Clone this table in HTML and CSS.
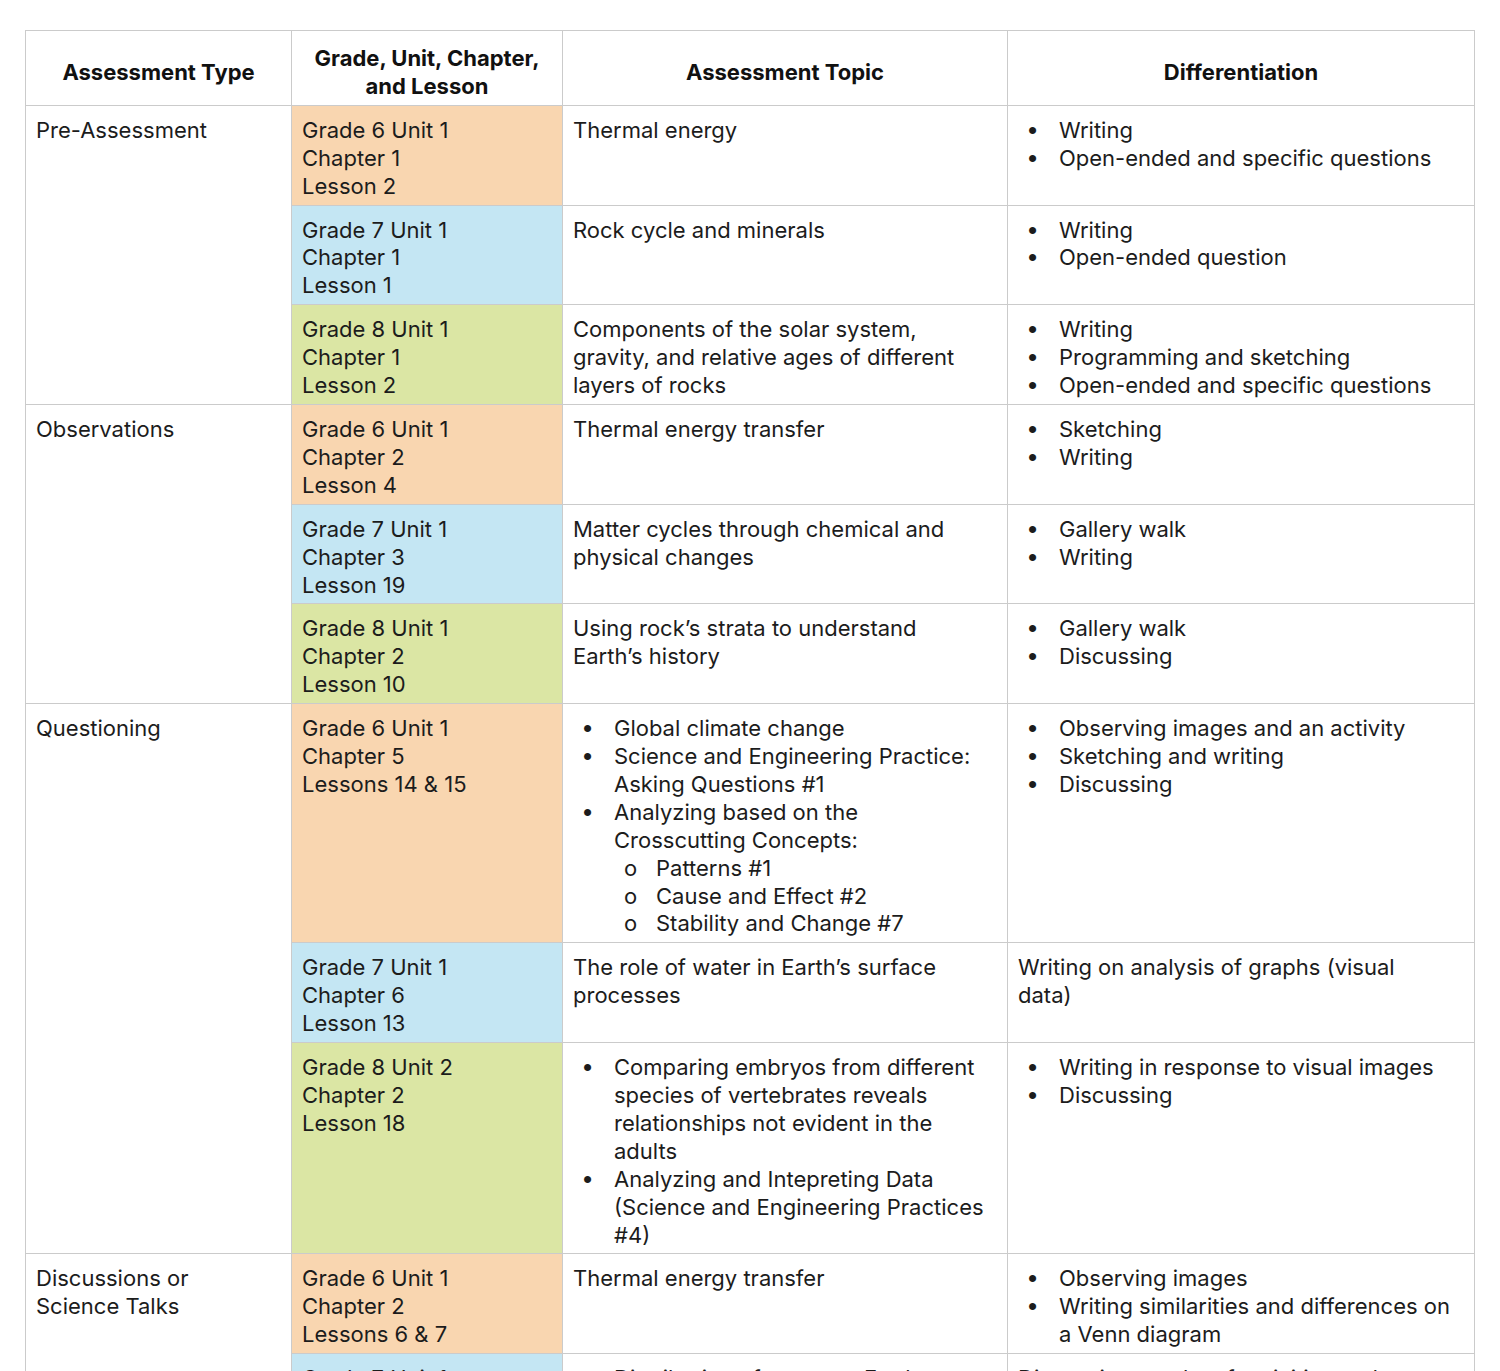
FILE: index.html
```html
<!DOCTYPE html>
<html lang="en">
<head>
<meta charset="utf-8">
<title>Assessment Table</title>
<link rel="stylesheet" href="styles.css">
</head>
<body>
<table class="grid">
  <colgroup>
    <col class="c1"><col class="c2"><col class="c3"><col class="c4">
  </colgroup>
  <thead>
    <tr>
      <th>Assessment Type</th>
      <th>Grade, Unit, Chapter,<br>and Lesson</th>
      <th>Assessment Topic</th>
      <th>Differentiation</th>
    </tr>
  </thead>
  <tbody>
    <tr>
      <td rowspan="3">Pre-Assessment</td>
      <td class="g6">Grade 6 Unit 1<br>Chapter 1<br>Lesson 2</td>
      <td>Thermal energy</td>
      <td><ul class="list"><li><span>Writing</span></li><li><span>Open-ended and specific questions</span></li></ul></td>
    </tr>
    <tr>
      <td class="g7">Grade 7 Unit 1<br>Chapter 1<br>Lesson 1</td>
      <td>Rock cycle and minerals</td>
      <td><ul class="list"><li><span>Writing</span></li><li><span>Open-ended question</span></li></ul></td>
    </tr>
    <tr>
      <td class="g8">Grade 8 Unit 1<br>Chapter 1<br>Lesson 2</td>
      <td>Components of the solar system,<br>gravity, and relative ages of different<br>layers of rocks</td>
      <td><ul class="list"><li><span>Writing</span></li><li><span>Programming and sketching</span></li><li><span>Open-ended and specific questions</span></li></ul></td>
    </tr>

    <tr>
      <td rowspan="3">Observations</td>
      <td class="g6">Grade 6 Unit 1<br>Chapter 2<br>Lesson 4</td>
      <td>Thermal energy transfer</td>
      <td><ul class="list"><li><span>Sketching</span></li><li><span>Writing</span></li></ul></td>
    </tr>
    <tr>
      <td class="g7">Grade 7 Unit 1<br>Chapter 3<br>Lesson 19</td>
      <td>Matter cycles through chemical and<br>physical changes</td>
      <td><ul class="list"><li><span>Gallery walk</span></li><li><span>Writing</span></li></ul></td>
    </tr>
    <tr>
      <td class="g8">Grade 8 Unit 1<br>Chapter 2<br>Lesson 10</td>
      <td>Using rock’s strata to understand<br>Earth’s history</td>
      <td><ul class="list"><li><span>Gallery walk</span></li><li><span>Discussing</span></li></ul></td>
    </tr>

    <tr>
      <td rowspan="3">Questioning</td>
      <td class="g6">Grade 6 Unit 1<br>Chapter 5<br>Lessons 14 &amp; 15</td>
      <td>
        <ul class="list">
          <li><span>Global climate change</span></li>
          <li><span>Science and Engineering Practice:<br>Asking Questions #1</span></li>
          <li><div>Analyzing based on the<br>Crosscutting Concepts:
            <ul class="sub">
              <li><span>Patterns #1</span></li>
              <li><span>Cause and Effect #2</span></li>
              <li><span>Stability and Change #7</span></li>
            </ul></div>
          </li>
        </ul>
      </td>
      <td><ul class="list"><li><span>Observing images and an activity</span></li><li><span>Sketching and writing</span></li><li><span>Discussing</span></li></ul></td>
    </tr>
    <tr>
      <td class="g7">Grade 7 Unit 1<br>Chapter 6<br>Lesson 13</td>
      <td>The role of water in Earth’s surface<br>processes</td>
      <td>Writing on analysis of graphs (visual<br>data)</td>
    </tr>
    <tr>
      <td class="g8">Grade 8 Unit 2<br>Chapter 2<br>Lesson 18</td>
      <td>
        <ul class="list">
          <li><span>Comparing embryos from different<br>species of vertebrates reveals<br>relationships not evident in the<br>adults</span></li>
          <li><span>Analyzing and Intepreting Data<br>(Science and Engineering Practices<br>#4)</span></li>
        </ul>
      </td>
      <td><ul class="list"><li><span>Writing in response to visual images</span></li><li><span>Discussing</span></li></ul></td>
    </tr>

    <tr>
      <td rowspan="2">Discussions or<br>Science Talks</td>
      <td class="g6">Grade 6 Unit 1<br>Chapter 2<br>Lessons 6 &amp; 7</td>
      <td>Thermal energy transfer</td>
      <td><ul class="list"><li><span>Observing images</span></li><li><span>Writing similarities and differences on<br>a Venn diagram</span></li></ul></td>
    </tr>
    <tr>
      <td class="g7">Grade 7 Unit 1<br>Chapter 4<br>Lesson 9</td>
      <td><ul class="list"><li><span>Distribution of water on Earth</span></li></ul></td>
      <td>Discussing results of activities and<br>data</td>
    </tr>
  </tbody>
</table>
</body>
</html>
```
FILE: styles.css
```css
html, body {
  margin: 0;
  padding: 0;
  background: #ffffff;
}

body {
  padding: 30px 0 40px 25px;
  font-family: Inter, "Noto Sans", "Liberation Sans", sans-serif;
  font-size: 22px;
  line-height: 27.9px;
  color: #1c1c1c;
}

.grid {
  border-collapse: collapse;
  table-layout: fixed;
  width: 1449px;
}

.c1 { width: 266px; }
.c2 { width: 271px; }
.c3 { width: 445px; }
.c4 { width: 467px; }

.grid th,
.grid td {
  border: 1px solid #cbcbcb;
  padding: 11px 10px 4px 10px;
  vertical-align: top;
  text-align: left;
  white-space: nowrap;
}

.grid th {
  font-weight: 700;
  text-align: center;
  vertical-align: middle;
  padding: 14px 10px 4px 10px;
  color: #111111;
}

.g6 { background: #f9d6b0; }
.g7 { background: #c4e6f3; }
.g8 { background: #dbe6a4; }

.list,
.sub {
  list-style: none;
  margin: 0;
  padding: 0;
}

.list > li {
  display: flex;
}

.list > li::before {
  content: "•";
  font-family: "Liberation Sans", sans-serif;
  font-size: 26px;
  line-height: 27.9px;
  flex: 0 0 41px;
  box-sizing: border-box;
  padding-left: 10px;
}

.sub > li {
  display: flex;
}

.sub > li::before {
  content: "o";
  flex: 0 0 42px;
  box-sizing: border-box;
  padding-left: 10px;
}
```
